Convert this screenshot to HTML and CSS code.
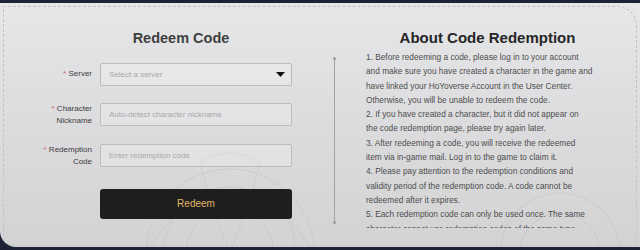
FILE: index.html
```html
<!DOCTYPE html>
<html lang="en">
<head>
    <meta charset="UTF-8">
    <meta name="viewport" content="width=device-width, initial-scale=1.0">
    <title>Redeem Code</title>
    <link rel="stylesheet" href="styles.css">
</head>
<body>
    <div class="panel">
        <div class="inner">
            <section class="redeem">
                <h2 class="redeem-title">Redeem Code</h2>
                <form class="form" onsubmit="return false">
                    <label class="label"><span class="req">*</span> Server</label>
                    <div class="select">
                        <span class="select-text">Select a server</span>
                        <svg class="arrow" width="9" height="5" viewBox="0 0 9 5"><path d="M0 0h9L4.5 5z" fill="#111"/></svg>
                    </div>

                    <label class="label" for="nickname"><span class="req">*</span> Character<br>Nickname</label>
                    <input class="field" id="nickname" type="text" placeholder="Auto-detect character nickname">

                    <label class="label" for="code"><span class="req">*</span> Redemption<br>Code</label>
                    <input class="field" id="code" type="text" placeholder="Enter redemption code">

                    <button class="btn" type="submit">Redeem</button>
                </form>
            </section>

            <div class="divider">
                <span class="dot"></span>
                <span class="line"></span>
                <span class="dot"></span>
            </div>

            <section class="about">
                <h2 class="about-title">About Code Redemption</h2>
                <div class="notes">
                    <p>1. Before redeeming a code, please log in to your account<br>and make sure you have created a character in the game and<br>have linked your HoYoverse Account in the User Center.<br>Otherwise, you will be unable to redeem the code.</p>
                    <p>2. If you have created a character, but it did not appear on<br>the code redemption page, please try again later.</p>
                    <p>3. After redeeming a code, you will receive the redeemed<br>item via in-game mail. Log in to the game to claim it.</p>
                    <p>4. Please pay attention to the redemption conditions and<br>validity period of the redemption code. A code cannot be<br>redeemed after it expires.</p>
                    <p>5. Each redemption code can only be used once. The same<br>character cannot use redemption codes of the same type</p>
                </div>
            </section>
        </div>
    </div>
</body>
</html>
```

FILE: styles.css
```css
body {
    margin: 0;
    background-color: #1c2336;
    font-family: "Liberation Sans", Arial, sans-serif;
}

.panel {
    margin-top: 3px;
    height: 244px;
    box-sizing: border-box;
    padding: 3px 3px 1px 3px;
    background:
        url("data:image/svg+xml,%3Csvg xmlns='http://www.w3.org/2000/svg' width='640' height='244'%3E%3Cg fill='none' stroke='%23c6c6c6' stroke-width='1' opacity='0.7'%3E%3Ccircle cx='230' cy='250' r='44'/%3E%3Ccircle cx='230' cy='250' r='66'/%3E%3Ccircle cx='230' cy='250' r='84'/%3E%3Cpath d='M200 160 q30 -20 60 0 q-10 40 -30 90 q-20 -50 -30 -90z'/%3E%3Cpath d='M150 244 q40 -60 80 -60 q40 0 80 60'/%3E%3Ccircle cx='560' cy='250' r='40'/%3E%3Ccircle cx='560' cy='250' r='60'/%3E%3C/g%3E%3C/svg%3E") no-repeat,
        linear-gradient(180deg, #e6e7e9 0%, #dddddf 45%, #d3d3d4 100%);
    border-radius: 0 0 0 16px;
}

.inner {
    height: 100%;
    box-sizing: border-box;
    border: 1px dashed #c3c3c3;
    border-radius: 0 20px 0 12px;
    display: flex;
}

/* left column */
.redeem {
    width: 318px;
    box-sizing: border-box;
    padding: 21.6px 0 0 36px;
}

.redeem-title {
    margin: 0;
    font-size: 14.5px;
    line-height: 18px;
    text-align: center;
    color: #404040;
}

.form {
    margin: 16.4px 0 0 0;
    display: grid;
    grid-template-columns: 52px 192px;
    column-gap: 8px;
    row-gap: 17px;
    align-items: center;
}

.label {
    font-size: 8px;
    line-height: 12px;
    text-align: right;
    color: #3c3c3c;
}

.req {
    color: #e26262;
}

.select,
.field {
    height: 23px;
    box-sizing: border-box;
    border: 1px solid #bcbcbc;
    border-radius: 2px;
    background-color: rgba(255, 255, 255, 0.22);
    font-family: inherit;
    font-size: 8px;
}

.select {
    display: flex;
    align-items: center;
    justify-content: space-between;
    padding: 0 6px 0 8px;
}

.select-text {
    color: #a8a8a8;
}

.field {
    width: 100%;
    padding: 0 8px;
    color: #333;
    outline: none;
}

.field::placeholder {
    color: #a8a8a8;
}

.btn {
    grid-column: 2;
    margin-top: 4px;
    height: 30px;
    border: none;
    border-radius: 3px;
    background-color: #1e1e1e;
    color: #e3b666;
    font-family: inherit;
    font-size: 10px;
    cursor: pointer;
}

/* divider */
.divider {
    display: flex;
    flex-direction: column;
    align-items: center;
    width: 3px;
    height: 167px;
    margin: 50px 0 0 11px;
}

.dot {
    width: 3px;
    height: 3px;
    border-radius: 50%;
    background-color: #9c9c9c;
}

.line {
    flex: 1;
    width: 1px;
    background-color: #a2a2a2;
}

/* right column */
.about {
    width: 243px;
    margin-left: 30px;
    padding-top: 21.8px;
}

.about-title {
    margin: 0;
    font-size: 15px;
    line-height: 18px;
    text-align: center;
    color: #262626;
}

.notes {
    margin-top: 3.2px;
    height: 178px;
    overflow: hidden;
    font-size: 8.3px;
    line-height: 14.3px;
    color: #4e4e4e;
    white-space: nowrap;
}

.notes p {
    margin: 0;
}
```
